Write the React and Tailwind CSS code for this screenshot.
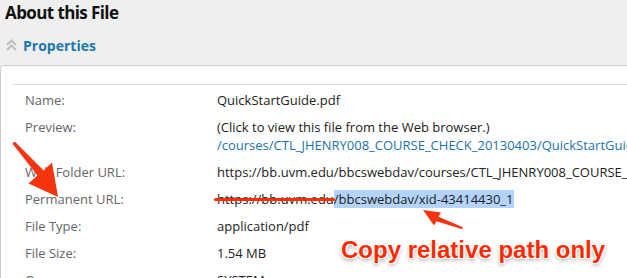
import React from "react";

const rows = [
    { label: "Name:", value: "QuickStartGuide.pdf" },
    {
        label: "Preview:",
        value: "(Click to view this file from the Web browser.)",
        link: "/courses/CTL_JHENRY008_COURSE_CHECK_20130403/QuickStartGuide.pdf",
    },
    { label: "Web Folder URL:", value: "https://bb.uvm.edu/bbcswebdav/courses/CTL_JHENRY008_COURSE_CHECK_20130403/QuickStartGuide.pdf" },
    { label: "Permanent URL:", permanent: true },
    { label: "File Type:", value: "application/pdf" },
    { label: "File Size:", value: "1.54 MB" },
    { label: "Owner:", value: "SYSTEM" },
];

const App = () => {
    return (
        <div className="relative w-[627px] h-[278px] overflow-hidden bg-[#efefef] font-['Open_Sans',sans-serif]">
            <div id="header" className="pl-[5px] pt-[1px]">
                <h2 className="text-[17px] leading-[24px] font-bold tracking-[-0.6px] text-[#111]">About this File</h2>
                <div className="flex items-center gap-[6px] mt-[10px] pl-[1px] h-[20px]">
                    <svg width="11" height="12" viewBox="0 0 11 12" className="text-[#bdbdbd]">
                        <path d="M1 6 L5.5 1.5 L10 6" fill="none" stroke="currentColor" strokeWidth="2" />
                        <path d="M1 11 L5.5 6.5 L10 11" fill="none" stroke="currentColor" strokeWidth="2" />
                    </svg>
                    <span className="text-[14px] font-bold text-[#1a77ab]">Properties</span>
                </div>
            </div>

            <div id="panel" className="mt-[10px] bg-white border-t border-l border-[#cccccc] rounded-tl-[4px] h-[300px] pl-[12px] pt-[18px]">
                <div className="border-t border-[#dddddd] pt-[6px] pl-[12px]">
                    {rows.map((row) => (
                        <div key={row.label} className="flex pb-[9px] text-[13px] leading-[18px] whitespace-nowrap">
                            <div className="w-[192px] shrink-0 text-[#666666]">{row.label}</div>
                            <div className="text-[#222222]">
                                {row.permanent ? (
                                    <span>
                                        <span className="relative">
                                            https://bb.uvm.edu
                                            <span className="absolute left-[-3px] right-[-1px] top-[8px] h-[3px] rounded-full bg-[#f4300c]"></span>
                                        </span>
                                        <span className="bg-[#b3d4fc]">/bbcswebdav/xid-43414430_1</span>
                                    </span>
                                ) : (
                                    <>
                                        <div>{row.value}</div>
                                        {row.link && <div className="text-[#1a73a8]">{row.link}</div>}
                                    </>
                                )}
                            </div>
                        </div>
                    ))}
                </div>
            </div>

            {/* annotation arrows */}
            <svg className="absolute left-0 top-0 pointer-events-none" width="627" height="278">
                <path
                    d="M15.2 142 L43.6 170.4 L52 162.5 L58 197 L28.5 183.5 L37.4 175.6 L12.8 144 Q12.5 141.5 15.2 142 Z"
                    fill="#f5330e"
                />
                <path
                    d="M423 210 L441 212.5 L438.5 216.7 L462.4 227.1 Q463 229.5 461.6 228.9 L436.5 221.3 L434 225.5 Z"
                    fill="#f5330e"
                />
            </svg>

            <div className="absolute left-[341px] top-[235px] text-[24px] leading-[30px] font-bold text-[#ff2a00] font-['Liberation_Sans',Arial,sans-serif] whitespace-nowrap [text-shadow:1px_1px_0_#fff,-1px_-1px_0_#fff,1px_-1px_0_#fff,-1px_1px_0_#fff,0_1px_0_#fff,0_-1px_0_#fff,1px_0_0_#fff,-1px_0_0_#fff,0_2px_4px_rgba(0,0,0,0.45)]">
                Copy relative path only
            </div>
        </div>
    );
};

export default App;
